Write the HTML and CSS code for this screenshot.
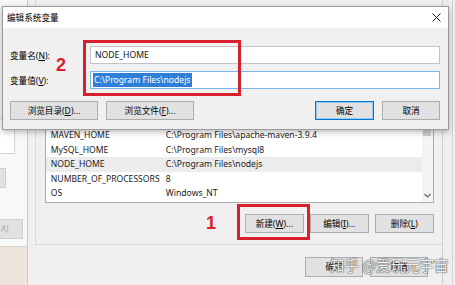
FILE: index.html
```html
<!DOCTYPE html>
<html lang="zh-CN">
<head>
    <meta charset="UTF-8">
    <meta name="viewport" content="width=device-width, initial-scale=1.0">
    <title>编辑系统变量</title>
    <link rel="stylesheet" href="styles.css">
</head>
<body>
    <div class="desk">
        <div class="side">
            <div class="side-box"></div>
            <div class="side-btn"></div>
            <div class="side-btn wide">A)</div>
            <div class="side-foot"></div>
        </div>

        <div class="win">
            <div class="group">
                <div class="list">
                    <div class="rows">
                        <div class="row"><span class="key">DriverData</span><span>C:\Windows\System32\Drivers\DriverData</span></div>
                        <div class="row"><span class="key">JAVA_HOME</span><span>C:\Program Files\Java\jdk-17</span></div>
                        <div class="row"><span class="key">MAVEN_HOME</span><span>C:\Program Files\apache-maven-3.9.4</span></div>
                        <div class="row"><span class="key">MySQL_HOME</span><span>C:\Program Files\mysql8</span></div>
                        <div class="row hover"><span class="key">NODE_HOME</span><span>C:\Program Files\nodejs</span></div>
                        <div class="row"><span class="key">NUMBER_OF_PROCESSORS</span><span>8</span></div>
                        <div class="row"><span class="key">OS</span><span>Windows_NT</span></div>
                    </div>
                    <div class="vscroll">
                        <div class="thumb"></div>
                        <svg class="arrow" width="7" height="5" viewBox="0 0 7 5">
                            <path d="M0.5 1 L3.5 4 L6.5 1" fill="none" stroke="#606060" stroke-width="1.1"/>
                        </svg>
                    </div>
                </div>
                <div class="list-actions">
                    <button class="btn">新建(<u>W</u>)...</button>
                    <button class="btn">编辑(<u>I</u>)...</button>
                    <button class="btn">删除(<u>L</u>)</button>
                </div>
            </div>
            <div class="win-actions">
                <button class="btn">确定</button>
                <button class="btn">取消</button>
            </div>
        </div>

        <div class="edge"></div>
    </div>

    <div class="dialog">
        <div class="titlebar">
            <span>编辑系统变量</span>
            <svg class="close" width="9" height="9" viewBox="0 0 9 9">
                <path d="M0.5 0.5 L8.5 8.5 M8.5 0.5 L0.5 8.5" stroke="#222" stroke-width="1"/>
            </svg>
        </div>
        <div class="dialog-body">
            <div class="field">
                <label>变量名(<u>N</u>):</label>
                <div class="input">NODE_HOME</div>
            </div>
            <div class="field">
                <label>变量值(<u>V</u>):</label>
                <div class="input focus"><span class="sel">C:\Program Files\nodejs</span></div>
            </div>
            <div class="dialog-actions">
                <button class="btn browse">浏览目录(<u>D</u>)...</button>
                <button class="btn browse">浏览文件(<u>F</u>)...</button>
                <span class="spacer"></span>
                <button class="btn default">确定</button>
                <button class="btn">取消</button>
            </div>
        </div>
    </div>

    <!-- red annotations -->
    <div class="mark mark-2"></div>
    <div class="num num-2">2</div>
    <div class="mark mark-1"></div>
    <div class="num num-1">1</div>

    <div class="watermark">知乎 @爱玩元宇宙</div>
</body>
</html>
```

FILE: styles.css
```css
body {
    margin: 0;
    width: 455px;
    height: 285px;
    overflow: hidden;
    position: relative;
    background: #f0f0f0;
    font-family: "Noto Sans", "Noto Sans CJK SC", sans-serif;
    font-size: 8.6px;
    color: #000;
}
u {
    text-decoration-thickness: 1px;
    text-underline-offset: 1px;
}

/* background window */
.desk {
    display: flex;
    height: 285px;
}
.side {
    width: 27px;
    border-right: 1px solid #c9c9c9;
    background: #f8f8f8;
    display: flex;
    flex-direction: column;
}
.side-box {
    margin-top: 118px;
    width: 14px;
    height: 34px;
    background: #fff;
    border: 1px solid #d4d4d4;
    border-left: none;
}
.side-btn {
    margin-top: 14px;
    width: 6px;
    height: 20px;
    background: #e1e1e1;
    border: 1px solid #cfcfcf;
    border-left: none;
    box-sizing: border-box;
}
.side-btn.wide {
    margin-top: 31px;
    width: 23px;
    color: #a8a8a8;
    font-size: 8px;
    line-height: 18px;
    padding-left: 1px;
}
.side-foot {
    margin-top: 7px;
    flex: 1;
    background: #ece4dd;
    border-top: 1px solid #dcd6d0;
}

.win {
    width: 418px;
    padding-left: 7px;
    box-sizing: border-box;
    border-right: 1px solid #cfcfcf;
    display: flex;
    flex-direction: column;
}
.group {
    height: 245px;
    box-sizing: border-box;
    border-left: 1px solid #dadada;
    border-bottom: 1px solid #dadada;
    padding: 98px 0 0 9px;
}
.list {
    width: 389px;
    height: 105px;
    box-sizing: border-box;
    border: 1px solid #adadad;
    background: #fff;
    display: flex;
    overflow: hidden;
}
.rows {
    flex: 1;
}
.row {
    display: flex;
    height: 14.5px;
    line-height: 14.5px;
    padding-left: 5px;
    white-space: nowrap;
    color: #1a1a1a;
}
.row.hover {
    background: #ececec;
}
.key {
    width: 115px;
}
.vscroll {
    width: 11px;
    background: #f4f4f4;
    display: flex;
    flex-direction: column;
    align-items: center;
}
.thumb {
    width: 8px;
    height: 37px;
    background: #cdcdcd;
}
.arrow {
    margin-top: auto;
    margin-bottom: 4px;
}
.list-actions {
    width: 389px;
    margin-top: 11px;
    display: flex;
    justify-content: flex-end;
    gap: 6px;
}
.btn {
    font: inherit;
    color: #000;
    background: #e1e1e1;
    border: 1px solid #adadad;
    border-radius: 0;
    padding: 0;
    width: 59px;
    height: 19px;
    line-height: 16px;
}
.win-actions {
    margin-top: 12px;
    padding-right: 14px;
    display: flex;
    justify-content: flex-end;
    gap: 7px;
}
.win-actions .btn {
    width: 58px;
    height: 20px;
}
.edge {
    width: 9px;
    border-right: 1px solid #d2d2d2;
    margin-right: 2px;
    background: #eeeeee;
}

/* dialog window */
.dialog {
    position: absolute;
    left: 2px;
    top: 6px;
    width: 447px;
    height: 124px;
    box-sizing: border-box;
    border: 1px solid #9a9a9a;
    background: #f0f0f0;
    box-shadow: 0 2px 6px rgba(0, 0, 0, 0.28);
}
.titlebar {
    height: 21px;
    background: #fff;
    display: flex;
    align-items: center;
    padding: 0 7px 0 4px;
    font-size: 8.6px;
}
.close {
    margin-left: auto;
}
.dialog-body {
    padding: 18px 8px 0 7px;
}
.field {
    display: flex;
    align-items: center;
    margin-bottom: 7px;
}
.field label {
    width: 80px;
}
.input {
    flex: 1;
    height: 18px;
    box-sizing: border-box;
    border: 1px solid #c3c3c3;
    background: #fff;
    padding-left: 4px;
    line-height: 16px;
    color: #111;
}
.input.focus {
    border-color: #7eb4ea;
    padding-left: 2px;
}
.sel {
    background: #2f7fd8;
    color: #fff;
    padding: 1px 1px;
}
.dialog-actions {
    margin-top: 12px;
    display: flex;
    gap: 8px;
}
.dialog-actions .btn.browse {
    width: 88px;
}
.dialog-actions .btn {
    width: 58px;
}
.dialog-actions .btn.default {
    width: 59px;
    border: 1px solid #0078d7;
    box-shadow: inset 0 0 0 1px #9cc7ee;
}
.spacer {
    flex: 1;
}

/* annotations */
.mark {
    position: absolute;
    border: 3px solid #d71f2d;
    box-sizing: border-box;
}
.mark-2 {
    left: 83px;
    top: 40px;
    width: 158px;
    height: 56px;
}
.mark-1 {
    left: 237px;
    top: 204px;
    width: 73px;
    height: 36px;
}
.num {
    position: absolute;
    color: #d71f2d;
    font-family: "Liberation Sans", Arial, sans-serif;
    font-weight: bold;
    font-size: 18px;
    line-height: 18px;
}
.num-2 {
    left: 56px;
    top: 56px;
}
.num-1 {
    left: 206px;
    top: 214px;
}

.watermark {
    position: absolute;
    left: 330px;
    top: 255px;
    font-family: "Noto Sans CJK SC", sans-serif;
    font-size: 14.5px;
    line-height: 20px;
    color: rgba(255, 255, 255, 0.92);
    white-space: nowrap;
    text-shadow: 0 0 1px #555, 0 0 1px #555, 0 0 2px rgba(0, 0, 0, 0.45);
}
```
